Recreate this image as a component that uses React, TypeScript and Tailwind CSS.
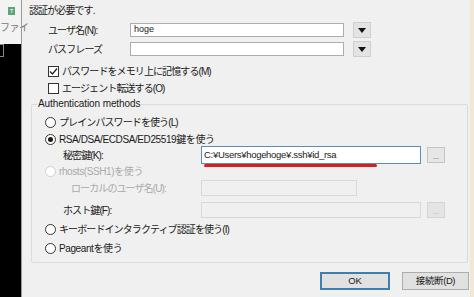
import React from "react";

const font = { fontFamily: '"Liberation Sans", "Noto Sans CJK JP", sans-serif' };

function Radio({ checked, disabled }: { checked?: boolean; disabled?: boolean }) {
  return (
    <span
      className={`flex h-[11px] w-[11px] shrink-0 items-center justify-center rounded-full border bg-white ${
        disabled ? "border-[#cfcfcf]" : "border-[#333]"
      }`}
    >
      {checked && <span className="h-[5px] w-[5px] rounded-full bg-[#1a1a1a]" />}
    </span>
  );
}

function Check({ checked }: { checked?: boolean }) {
  return (
    <span className="flex h-[11px] w-[11px] shrink-0 items-center justify-center border border-[#333] bg-white">
      {checked && (
        <svg width="9" height="9" viewBox="0 0 9 9">
          <path d="M1 4.5 L3.5 7 L8 1.5" fill="none" stroke="#222" strokeWidth="1.3" />
        </svg>
      )}
    </span>
  );
}

function DropBtn() {
  return (
    <div className="flex h-[16px] w-[18px] items-center justify-center border border-[#cfcfcf] bg-[#e3e3e3]">
      <svg width="8" height="5" viewBox="0 0 8 5">
        <path d="M0 0 H8 L4 5 Z" fill="#111" />
      </svg>
    </div>
  );
}

function DotBtn({ disabled }: { disabled?: boolean }) {
  return (
    <div
      className={`flex h-[16px] w-[18px] items-end justify-center border pb-[2px] text-[7px] leading-none ${
        disabled ? "border-[#d4d4d4] bg-[#e4e4e4] text-[#aaa]" : "border-[#c4c4c4] bg-[#e6e6e6] text-[#444]"
      }`}
    >
      ...
    </div>
  );
}

const jp = "tracking-[-0.9px]";
const mix = "tracking-[-0.4px]";

export default function App() {
  return (
    <div className="flex h-[297px] w-[474px] overflow-hidden bg-[#f0f0f0] text-[10px] text-[#1a1a1a]" style={font}>
      {/* background window strip */}
      <div className="flex w-[21px] shrink-0 flex-col">
        <div className="flex h-[44px] flex-col bg-[#f3f3f3]">
          <div className="ml-[8px] mt-[7px] flex h-[8px] w-[7px] items-center justify-center bg-[#5aa87a] text-[6px] leading-none text-white">
            T
          </div>
          <div className="mt-[8px] whitespace-nowrap text-[10px] leading-none text-[#777] tracking-[-0.5px]">ファイ</div>
        </div>
        <div className="relative flex-1 bg-black">
          <div className="h-[13px] w-[4px] border border-l-0 border-[#888]" />
        </div>
      </div>
      <div className="w-px shrink-0 bg-[#9a9a9a]" />

      {/* dialog */}
      <div className="flex flex-1 flex-col border-r-[4px] border-[#f3e7d6] pl-[7px]">
        <div className={`mt-[4px] h-[13px] leading-[13px] ${jp}`}>認証が必要です.</div>

        <div className="mt-[5px] flex h-[16px] items-center">
          <span className={`ml-[19px] w-[82px] shrink-0 ${jp}`}>ユーザ名(N):</span>
          <div className="flex h-[14px] w-[214px] shrink-0 items-center border border-[#abadb3] bg-white pl-[3px] text-[9px]">hoge</div>
          <div className="ml-[9px]">
            <DropBtn />
          </div>
        </div>
        <div className="mt-[3px] flex h-[16px] items-center">
          <span className={`ml-[19px] w-[82px] shrink-0 ${jp}`}>パスフレーズ</span>
          <div className="h-[14px] w-[214px] shrink-0 border border-[#abadb3] bg-white" />
          <div className="ml-[9px]">
            <DropBtn />
          </div>
        </div>

        <div className="mt-[8px] flex h-[12px] items-center pl-[19px]">
          <Check checked />
          <span className={`ml-[3px] ${jp}`}>パスワードをメモリ上に記憶する(M)</span>
        </div>
        <div className="mt-[5px] flex h-[12px] items-center pl-[19px]">
          <Check />
          <span className={`ml-[3px] ${jp}`}>エージェント転送する(O)</span>
        </div>

        {/* group */}
        <div className="relative ml-[2px] mr-[2px] mt-[10px] h-[159px] rounded-[2px] border border-[#dcdcdc]">
          <div className="absolute left-[5px] top-[-8px] bg-[#f0f0f0] px-[1px] leading-[14px] tracking-[-0.1px]">
            Authentication methods
          </div>
          <div className="flex flex-col pl-[13px]">
            <div className="mt-[11px] flex h-[12px] items-center">
              <Radio />
              <span className={`ml-[3px] ${jp}`}>プレインパスワードを使う(L)</span>
            </div>
            <div className="mt-[5px] flex h-[12px] items-center">
              <Radio checked />
              <span className={`ml-[3px] ${mix}`}>RSA/DSA/ECDSA/ED25519鍵を使う</span>
            </div>
            <div className="mt-[1px] flex h-[18px] items-center">
              <span className={`ml-[18px] w-[138px] shrink-0 ${jp}`}>秘密鍵(K):</span>
              <div className="relative flex h-[18px] w-[220px] shrink-0 items-center border border-[#5b8db8] bg-white pl-[2px] text-[9.5px] tracking-[-0.3px]">
                C:¥Users¥hogehoge¥.ssh¥id_rsa
                <div className="absolute left-[2px] top-[17px] h-[3px] w-[173px] rounded-full bg-[#d42020] blur-[0.6px]" />
              </div>
              <div className="ml-[6px]">
                <DotBtn />
              </div>
            </div>
            <div className="mt-[1px] flex h-[12px] items-center text-[#aaa]">
              <Radio disabled />
              <span className={`ml-[3px] ${mix}`}>rhosts(SSH1)を使う</span>
            </div>
            <div className="mt-[3px] flex h-[16px] items-center text-[#aaa]">
              <span className={`ml-[26px] w-[130px] shrink-0 ${jp}`}>ローカルのユーザ名(U):</span>
              <div className="h-[16px] w-[156px] shrink-0 border border-[#d9d9d9] bg-[#f0f0f0]" />
            </div>
            <div className="mt-[6px] flex h-[16px] items-center">
              <span className={`ml-[18px] w-[138px] shrink-0 ${jp}`}>ホスト鍵(F):</span>
              <div className="h-[16px] w-[220px] shrink-0 border border-[#d9d9d9] bg-[#f0f0f0]" />
              <div className="ml-[6px]">
                <DotBtn disabled />
              </div>
            </div>
            <div className="mt-[5px] flex h-[12px] items-center">
              <Radio />
              <span className={`ml-[3px] ${jp}`}>キーボードインタラクティブ認証を使う(I)</span>
            </div>
            <div className="mt-[7px] flex h-[12px] items-center">
              <Radio />
              <span className={`ml-[3px] ${mix}`}>Pageantを使う</span>
            </div>
          </div>
        </div>

        <div className="mt-[9px] flex justify-end pr-[1px]">
          <div className="flex h-[18px] w-[70px] items-center justify-center border-2 border-[#3f7fae] bg-[#e1e1e1] text-[9.5px]">
            OK
          </div>
          <div className={`ml-[12px] flex h-[18px] w-[67px] items-center justify-center border border-[#adadad] bg-[#e1e1e1] text-[9.5px] ${mix}`}>
            接続断(D)
          </div>
        </div>
      </div>
    </div>
  );
}
